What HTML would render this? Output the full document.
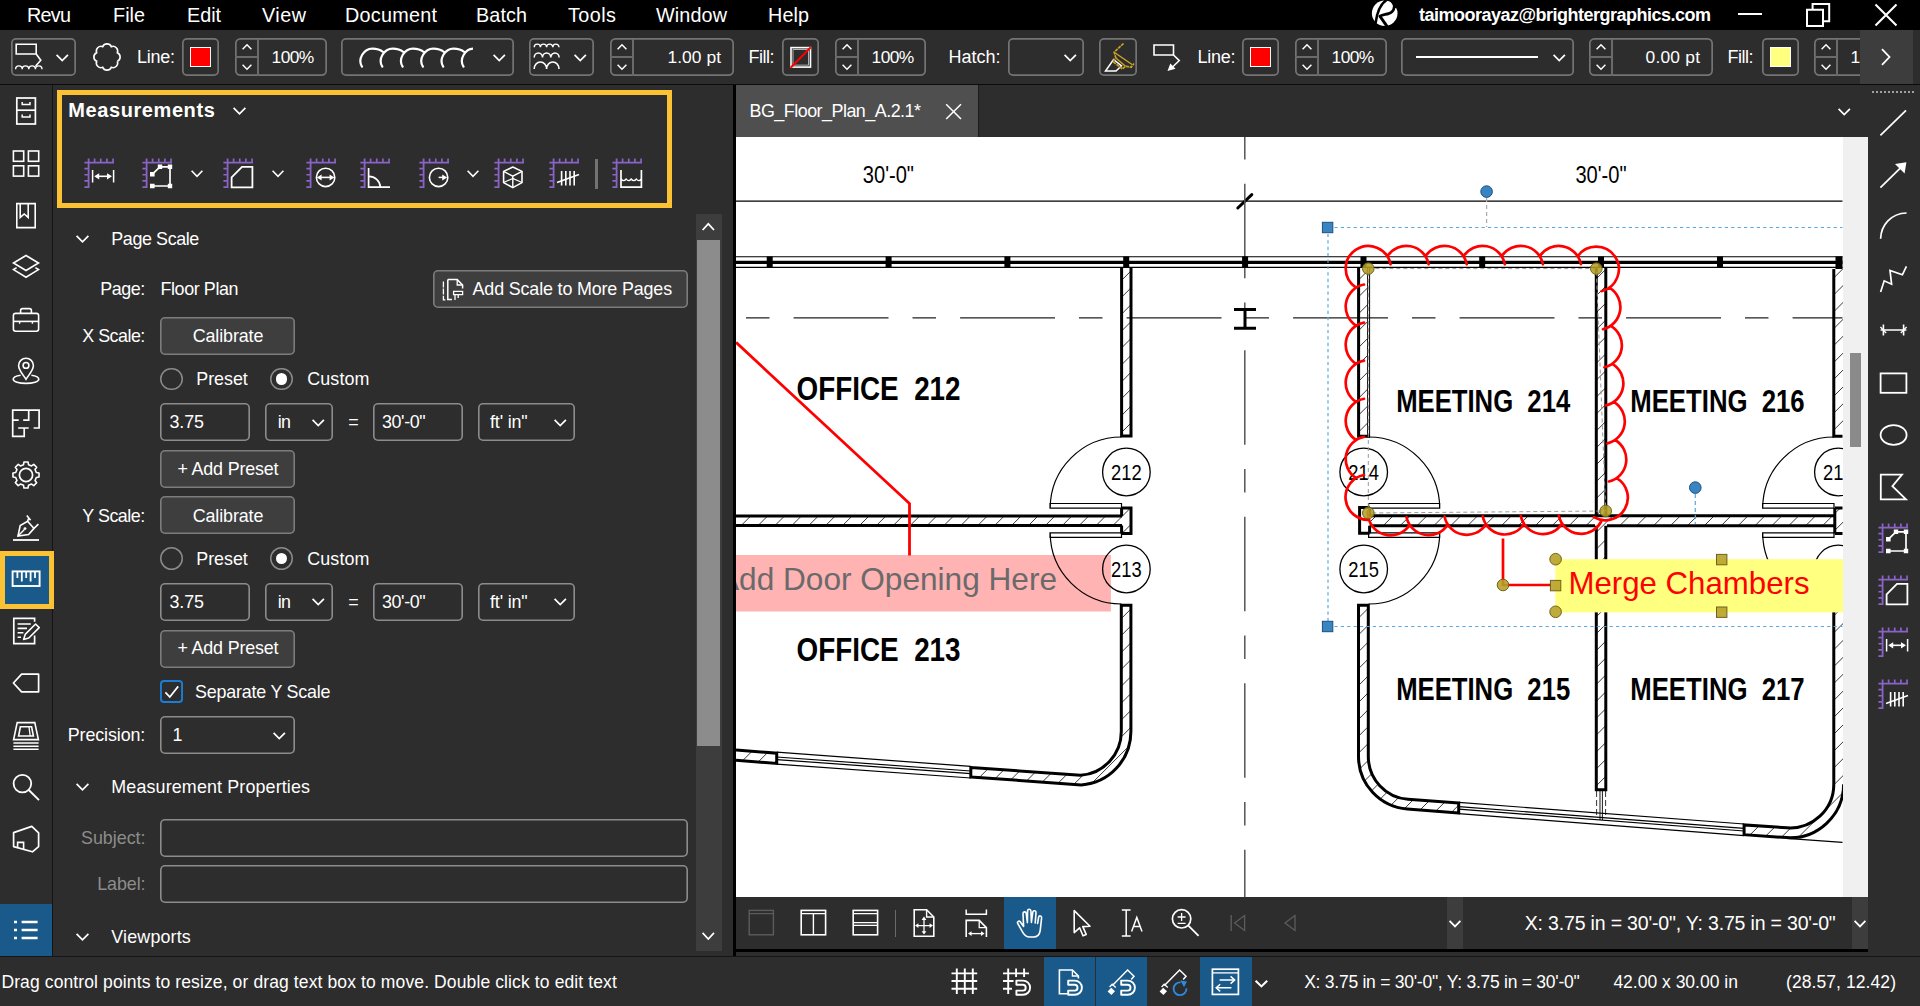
<!DOCTYPE html>
<html lang="en"><head><meta charset="utf-8"><title>Revu - BG_Floor_Plan_A.2.1</title>
<style>
html,body{margin:0;padding:0;background:#2d2d2d}
body{width:1920px;height:1006px;position:relative;overflow:hidden;font-family:"Liberation Sans",sans-serif;color:#fff}
.a{position:absolute;box-sizing:border-box;display:block}
.t{position:absolute;white-space:pre;display:block}
svg{overflow:visible}
</style></head><body>

<!-- menu bar -->
<div class="a" id="menubar" style="left:0;top:0;width:1920px;height:30px;background:#000">
<span class="t" id="m_Revu" style="left:27.00px;top:4px;font-size:19.80px;line-height:22px;letter-spacing:-0.729px;">Revu</span>
<span class="t" id="m_File" style="left:113.00px;top:4px;font-size:19.80px;line-height:22px;letter-spacing:0.042px;">File</span>
<span class="t" id="m_Edit" style="left:187.00px;top:4px;font-size:19.80px;line-height:22px;letter-spacing:-0.031px;">Edit</span>
<span class="t" id="m_View" style="left:262.00px;top:4px;font-size:19.80px;line-height:22px;letter-spacing:0.490px;">View</span>
<span class="t" id="m_Document" style="left:345.00px;top:4px;font-size:19.80px;line-height:22px;letter-spacing:0.263px;">Document</span>
<span class="t" id="m_Batch" style="left:476.00px;top:4px;font-size:19.80px;line-height:22px;letter-spacing:0.102px;">Batch</span>
<span class="t" id="m_Tools" style="left:568.00px;top:4px;font-size:19.80px;line-height:22px;letter-spacing:0.453px;">Tools</span>
<span class="t" id="m_Window" style="left:656.00px;top:4px;font-size:19.80px;line-height:22px;letter-spacing:0.128px;">Window</span>
<span class="t" id="m_Help" style="left:768.00px;top:4px;font-size:19.80px;line-height:22px;letter-spacing:0.104px;">Help</span>
<svg class="a" style="left:1371.00px;top:0.20px;" width="27" height="27" viewBox="0 0 27 27" fill="none" stroke="#fff" stroke-width="1.6"><circle cx="13.7" cy="13.2" r="12.8" fill="#fff" stroke="none"/><path d="M16.2 -0.6 C10.5 3 6.2 10 4.6 23" stroke="#000" stroke-width="2.5"/><path d="M8.9 16.2 C11.5 14.6 14.5 14.6 17.6 13.6 C21.4 12.4 23 9.6 23.2 6.6" stroke="#000" stroke-width="2.7" stroke-linecap="round"/><path d="M8.8 16 L16.2 26.6" stroke="#000" stroke-width="3"/><path d="M16.5 -1 C18.5 1.4 21.4 2.6 22.4 7.4 L28 9 V-1 Z" fill="#000" stroke="none"/></svg>
<span class="t" id="email" style="left:1419.00px;top:5px;font-size:18.00px;line-height:20px;font-weight:700;letter-spacing:-0.505px;">taimoorayaz@brightergraphics.com</span>
<div class="a" style="left:1738.00px;top:12.60px;width:24.00px;height:2.00px;background:#fff;"></div>
<svg class="a" style="left:1805.00px;top:2.00px;" width="26" height="26" viewBox="0 0 26 26" fill="none" stroke="#fff" stroke-width="1.6"><path d="M2 7.8 H18 V24 H2 Z" stroke-width="2"/><path d="M7.6 7 V1.9 H24.2 V19.2 H18.8" stroke-width="2"/></svg>
<svg class="a" style="left:1874.00px;top:3.00px;" width="24" height="24" viewBox="0 0 24 24" fill="none" stroke="#fff" stroke-width="1.6"><path d="M1.5 1.5 L22.5 22.5 M22.5 1.5 L1.5 22.5" stroke-width="2.1"/></svg>
</div>
<!-- properties toolbar -->
<div class="a" id="toolbar" style="left:0;top:30px;width:1920px;height:54px;background:#2d2d2d"></div>
<div class="a" style="left:0.00px;top:84.00px;width:1920.00px;height:1.00px;background:#0c0c0c;"></div>
<div class="a" style="left:11.00px;top:37.80px;width:65.00px;height:38.40px;border-radius:5px;box-shadow:inset 0 0 0 1.7px #747474;"></div>
<svg class="a" style="left:13.00px;top:40.00px;" width="32" height="32" viewBox="0 0 32 32" fill="none" stroke="#fff" stroke-width="1.6"><path d="M3.2 4.3 H23.2 V14 H3.2 Z"/><path d="M23.2 14 L27.8 20.3 L22.6 26"/><path d="M2.6 29.2 A3.3 3.3 0 0 1 9.2 29.2 A3.3 3.3 0 0 1 15.8 29.2 A3.3 3.3 0 0 1 22.4 29.2 A3.3 3.3 0 0 1 29 29.2" stroke-width="1.4"/></svg>
<svg class="a" style="left:55.50px;top:53.50px" width="12.5" height="7.6" fill="none" stroke="#fff" stroke-width="1.7"><path d="M0.6 0.8 L6.25 6.6 L11.9 0.8"/></svg>
<svg class="a" style="left:93.20px;top:42.90px;" width="28" height="28" viewBox="0 0 28 28" fill="none" stroke="#fff" stroke-width="1.6"><path d="M24.35 18.29 A4.70 4.70 0 0 1 18.29 24.35 A4.70 4.70 0 0 1 9.71 24.35 A4.70 4.70 0 0 1 3.65 18.29 A4.70 4.70 0 0 1 3.65 9.71 A4.70 4.70 0 0 1 9.71 3.65 A4.70 4.70 0 0 1 18.29 3.65 A4.70 4.70 0 0 1 24.35 9.71 A4.70 4.70 0 0 1 24.35 18.29" stroke-width="1.6"/></svg>
<span class="t" id="tb_line1" style="left:137.00px;top:47px;font-size:18.00px;line-height:20px;letter-spacing:-0.262px;">Line:</span>
<div class="a" style="left:182.00px;top:37.80px;width:37.00px;height:38.40px;border-radius:5px;box-shadow:inset 0 0 0 1.7px #747474;"></div><div class="a" style="left:190.00px;top:46.80px;width:19.40px;height:18.60px;background:#ff0000;border:1px solid #fff;box-sizing:content-box;"></div>
<div class="a" style="left:234.60px;top:37.80px;width:92.30px;height:38.40px;border-radius:5.5px;box-shadow:inset 0 0 0 1.7px #747474;"></div><div class="a" style="left:257.20px;top:38.50px;width:2.00px;height:37.00px;background:#6a6a6a;"></div><div class="a" style="left:235.00px;top:56.00px;width:22.60px;height:2.00px;background:#6a6a6a;"></div><svg class="a" style="left:241.80px;top:44.30px" width="10" height="6.2" fill="none" stroke="#fff" stroke-width="1.5"><path d="M0.6 5.2 L5 0.8 L9.4 5.2"/></svg><svg class="a" style="left:241.80px;top:63.80px" width="10" height="6.2" fill="none" stroke="#fff" stroke-width="1.5"><path d="M0.6 0.8 L5 5.2 L9.4 0.8"/></svg><span class="t" id="tb_pct1" style="left:271.60px;top:47px;font-size:17.40px;line-height:20px;letter-spacing:-0.595px;">100%</span>
<div class="a" style="left:341.00px;top:37.80px;width:172.60px;height:38.40px;border-radius:5px;box-shadow:inset 0 0 0 1.7px #747474;"></div>
<svg class="a" style="left:358.00px;top:46.50px;overflow:hidden" width="115.4" height="22" viewBox="0 0 115.4 22" fill="none" stroke="#fff" stroke-width="1.6"><path d="M4.0 19.6 C-0.7 12 5.8 1.6 14.3 1.6 C18.8 1.6 22.3 2.6 25.1 5 M24.3 19.6 C19.6 12 26.1 1.6 34.6 1.6 C39.1 1.6 42.6 2.6 45.4 5 M44.6 19.6 C39.9 12 46.4 1.6 54.9 1.6 C59.4 1.6 62.9 2.6 65.7 5 M64.9 19.6 C60.2 12 66.7 1.6 75.2 1.6 C79.7 1.6 83.2 2.6 86.0 5 M85.2 19.6 C80.5 12 87.0 1.6 95.5 1.6 C100.0 1.6 103.5 2.6 106.3 5 M105.5 19.6 C100.8 12 107.3 1.6 115.8 1.6 C120.3 1.6 123.8 2.6 126.6 5 " stroke-width="2.2" stroke-linecap="round"/></svg>
<svg class="a" style="left:492.50px;top:53.50px" width="12.5" height="7.6" fill="none" stroke="#fff" stroke-width="1.7"><path d="M0.6 0.8 L6.25 6.6 L11.9 0.8"/></svg>
<div class="a" style="left:529.00px;top:37.80px;width:65.40px;height:38.40px;border-radius:5px;box-shadow:inset 0 0 0 1.7px #747474;"></div>
<svg class="a" style="left:532.00px;top:42.00px;" width="30" height="30" viewBox="0 0 30 30" fill="none" stroke="#fff" stroke-width="1.6"><path d="M2.2 5.2 A3.1 3.1 0 0 1 8.4 5.2 A3.1 3.1 0 0 1 14.6 5.2 A3.1 3.1 0 0 1 20.8 5.2 A3.1 3.1 0 0 1 27 5.2" stroke-width="1.4"/><path d="M2.2 15.5 A4.15 4.6 0 0 1 10.5 15.5 A4.15 4.6 0 0 1 18.8 15.5 A4.15 4.6 0 0 1 27.1 15.5" stroke-width="1.5"/><path d="M2.2 27 A6.2 7 0 0 1 14.6 27 A6.2 7 0 0 1 27 27" stroke-width="1.6"/></svg>
<svg class="a" style="left:573.50px;top:53.50px" width="12.5" height="7.6" fill="none" stroke="#fff" stroke-width="1.7"><path d="M0.6 0.8 L6.25 6.6 L11.9 0.8"/></svg>
<div class="a" style="left:609.60px;top:37.80px;width:124.30px;height:38.40px;border-radius:5.5px;box-shadow:inset 0 0 0 1.7px #747474;"></div><div class="a" style="left:632.20px;top:38.50px;width:2.00px;height:37.00px;background:#6a6a6a;"></div><div class="a" style="left:610.00px;top:56.00px;width:22.60px;height:2.00px;background:#6a6a6a;"></div><svg class="a" style="left:616.80px;top:44.30px" width="10" height="6.2" fill="none" stroke="#fff" stroke-width="1.5"><path d="M0.6 5.2 L5 0.8 L9.4 5.2"/></svg><svg class="a" style="left:616.80px;top:63.80px" width="10" height="6.2" fill="none" stroke="#fff" stroke-width="1.5"><path d="M0.6 0.8 L5 5.2 L9.4 0.8"/></svg><span class="t" id="tb_pt1" style="left:667.50px;top:47px;font-size:17.40px;line-height:20px;letter-spacing:0.052px;">1.00 pt</span>
<span class="t" id="tb_fill1" style="left:748.50px;top:47px;font-size:18.00px;line-height:20px;letter-spacing:-0.500px;">Fill:</span>
<div class="a" style="left:782.00px;top:37.80px;width:37.00px;height:38.40px;border-radius:5px;box-shadow:inset 0 0 0 1.7px #747474;"></div>
<svg class="a" style="left:788.00px;top:44.00px;" width="26" height="26" viewBox="0 0 26 26" fill="none" stroke="#fff" stroke-width="1.6"><rect x="3" y="3.6" width="19.5" height="19.5" stroke="#fff" stroke-width="1.6"/><rect x="5" y="5.6" width="15.5" height="15.5" stroke="#d0d0d0" stroke-width="0.8"/><path d="M2.6 23.8 L22.8 3.2" stroke="#ff0000" stroke-width="2"/></svg>
<div class="a" style="left:834.60px;top:37.80px;width:91.30px;height:38.40px;border-radius:5.5px;box-shadow:inset 0 0 0 1.7px #747474;"></div><div class="a" style="left:857.20px;top:38.50px;width:2.00px;height:37.00px;background:#6a6a6a;"></div><div class="a" style="left:835.00px;top:56.00px;width:22.60px;height:2.00px;background:#6a6a6a;"></div><svg class="a" style="left:841.80px;top:44.30px" width="10" height="6.2" fill="none" stroke="#fff" stroke-width="1.5"><path d="M0.6 5.2 L5 0.8 L9.4 5.2"/></svg><svg class="a" style="left:841.80px;top:63.80px" width="10" height="6.2" fill="none" stroke="#fff" stroke-width="1.5"><path d="M0.6 0.8 L5 5.2 L9.4 0.8"/></svg><span class="t" id="tb_pct2" style="left:871.60px;top:47px;font-size:17.40px;line-height:20px;letter-spacing:-0.595px;">100%</span>
<span class="t" id="tb_hatch" style="left:948.50px;top:47px;font-size:18.00px;line-height:20px;letter-spacing:-0.006px;">Hatch:</span>
<div class="a" style="left:1008.00px;top:37.80px;width:76.00px;height:38.40px;border-radius:5px;box-shadow:inset 0 0 0 1.7px #747474;"></div>
<svg class="a" style="left:1063.50px;top:53.50px" width="12.5" height="7.6" fill="none" stroke="#fff" stroke-width="1.7"><path d="M0.6 0.8 L6.25 6.6 L11.9 0.8"/></svg>
<div class="a" style="left:1099.20px;top:37.80px;width:37.80px;height:38.40px;border-radius:5px;box-shadow:inset 0 0 0 1.7px #747474;"></div>
<svg class="a" style="left:1102.00px;top:40.00px;" width="32" height="32" viewBox="0 0 32 32" fill="none" stroke="#fff" stroke-width="1.6"><path d="M3.5 31 L14 31 L19.5 25.8 L11.5 19.5 Z" stroke="#fff" stroke-width="1.5"/><path d="M21.5 3.5 L12.2 12.2 L13.8 18 L10.8 21.5 L20.5 29 L23.5 26.2 L29.2 27.2 L32 23.5" stroke="#c9a227" stroke-width="1.7" stroke-dasharray="3.2 0.8"/><path d="M13.8 18 L23.5 26.2 M12.5 12.5 L30 24.5" stroke="#c9a227" stroke-width="1.5"/></svg>
<svg class="a" style="left:1151.00px;top:41.00px;" width="32" height="32" viewBox="0 0 32 32" fill="none" stroke="#fff" stroke-width="1.6"><path d="M3 4 H22.5 V14 H3 Z" stroke-width="1.6"/><path d="M22.5 14 L28.3 19.6 L21 26.5" stroke-width="1.5"/><path d="M16.5 30 L19.3 22.5 L24.5 27.8 Z" fill="#fff" stroke="none"/></svg>
<span class="t" id="tb_line2" style="left:1197.50px;top:47px;font-size:18.00px;line-height:20px;letter-spacing:-0.262px;">Line:</span>
<div class="a" style="left:1242.00px;top:37.80px;width:37.00px;height:38.40px;border-radius:5px;box-shadow:inset 0 0 0 1.7px #747474;"></div><div class="a" style="left:1250.00px;top:46.80px;width:19.40px;height:18.60px;background:#ff0000;border:1px solid #fff;box-sizing:content-box;"></div>
<div class="a" style="left:1294.60px;top:37.80px;width:92.30px;height:38.40px;border-radius:5.5px;box-shadow:inset 0 0 0 1.7px #747474;"></div><div class="a" style="left:1317.20px;top:38.50px;width:2.00px;height:37.00px;background:#6a6a6a;"></div><div class="a" style="left:1295.00px;top:56.00px;width:22.60px;height:2.00px;background:#6a6a6a;"></div><svg class="a" style="left:1301.80px;top:44.30px" width="10" height="6.2" fill="none" stroke="#fff" stroke-width="1.5"><path d="M0.6 5.2 L5 0.8 L9.4 5.2"/></svg><svg class="a" style="left:1301.80px;top:63.80px" width="10" height="6.2" fill="none" stroke="#fff" stroke-width="1.5"><path d="M0.6 0.8 L5 5.2 L9.4 0.8"/></svg><span class="t" id="tb_pct3" style="left:1331.60px;top:47px;font-size:17.40px;line-height:20px;letter-spacing:-0.595px;">100%</span>
<div class="a" style="left:1401.00px;top:37.80px;width:172.60px;height:38.40px;border-radius:5px;box-shadow:inset 0 0 0 1.7px #747474;"></div>
<div class="a" style="left:1416.00px;top:55.50px;width:122.00px;height:2.60px;background:#fff;"></div>
<svg class="a" style="left:1552.50px;top:53.50px" width="12.5" height="7.6" fill="none" stroke="#fff" stroke-width="1.7"><path d="M0.6 0.8 L6.25 6.6 L11.9 0.8"/></svg>
<div class="a" style="left:1588.60px;top:37.80px;width:124.30px;height:38.40px;border-radius:5.5px;box-shadow:inset 0 0 0 1.7px #747474;"></div><div class="a" style="left:1611.20px;top:38.50px;width:2.00px;height:37.00px;background:#6a6a6a;"></div><div class="a" style="left:1589.00px;top:56.00px;width:22.60px;height:2.00px;background:#6a6a6a;"></div><svg class="a" style="left:1595.80px;top:44.30px" width="10" height="6.2" fill="none" stroke="#fff" stroke-width="1.5"><path d="M0.6 5.2 L5 0.8 L9.4 5.2"/></svg><svg class="a" style="left:1595.80px;top:63.80px" width="10" height="6.2" fill="none" stroke="#fff" stroke-width="1.5"><path d="M0.6 0.8 L5 5.2 L9.4 0.8"/></svg><span class="t" id="tb_pt2" style="left:1645.50px;top:47px;font-size:17.40px;line-height:20px;letter-spacing:0.219px;">0.00 pt</span>
<span class="t" id="tb_fill2" style="left:1727.50px;top:47px;font-size:18.00px;line-height:20px;letter-spacing:-0.500px;">Fill:</span>
<div class="a" style="left:1761.50px;top:37.80px;width:37.00px;height:38.40px;border-radius:5px;box-shadow:inset 0 0 0 1.7px #747474;"></div><div class="a" style="left:1769.50px;top:46.80px;width:19.40px;height:18.60px;background:#ffff80;border:1px solid #fff;box-sizing:content-box;"></div>
<div class="a" style="left:1813.60px;top:37.80px;width:92.30px;height:38.40px;border-radius:5.5px;box-shadow:inset 0 0 0 1.7px #747474;"></div><div class="a" style="left:1836.20px;top:38.50px;width:2.00px;height:37.00px;background:#6a6a6a;"></div><div class="a" style="left:1814.00px;top:56.00px;width:22.60px;height:2.00px;background:#6a6a6a;"></div><svg class="a" style="left:1820.80px;top:44.30px" width="10" height="6.2" fill="none" stroke="#fff" stroke-width="1.5"><path d="M0.6 5.2 L5 0.8 L9.4 5.2"/></svg><svg class="a" style="left:1820.80px;top:63.80px" width="10" height="6.2" fill="none" stroke="#fff" stroke-width="1.5"><path d="M0.6 0.8 L5 5.2 L9.4 0.8"/></svg><span class="t" id="tb_pct4" style="left:1850.60px;top:47px;font-size:17.40px;line-height:20px;">100%</span>
<div class="a" style="left:1860.00px;top:30.00px;width:53.00px;height:54.00px;background:#3d3d3d;"></div>
<svg class="a" style="left:1880.00px;top:47.00px;" width="12" height="20" viewBox="0 0 12 20" fill="none" stroke="#fff" stroke-width="1.6"><path d="M2 2.2 L9.5 10 L2 17.8" stroke-width="1.8"/></svg>
<!-- left panel strip -->
<div class="a" style="left:52.00px;top:85.00px;width:1.40px;height:871.00px;background:#141414;"></div>
<svg class="a" style="left:10.00px;top:95.00px;" width="32" height="32" viewBox="0 0 32 32" fill="none" stroke="#fff" stroke-width="1.6"><rect x="6.8" y="3" width="18.6" height="26" stroke-width="1.7"/><path d="M6.8 15.2 H25.4" stroke-width="1.7"/><path d="M12.2 7 V9.6 H20 V7 M12.2 19.4 V22 H20 V19.4" stroke-width="1.5"/></svg>
<svg class="a" style="left:10.00px;top:147.00px;" width="32" height="32" viewBox="0 0 32 32" fill="none" stroke="#fff" stroke-width="1.6"><rect x="3.4" y="4" width="10.3" height="10.3"/><rect x="18.4" y="4" width="10.3" height="10.3"/><rect x="3.4" y="18.8" width="10.3" height="10.3"/><rect x="18.4" y="18.8" width="10.3" height="10.3"/></svg>
<svg class="a" style="left:10.00px;top:199.00px;" width="32" height="32" viewBox="0 0 32 32" fill="none" stroke="#fff" stroke-width="1.6"><path d="M6.8 4.6 H25.2 V28.6 H6.8 Z"/><path d="M10.2 4 V18.4 L14.2 15 L18.2 18.4 V4"/></svg>
<svg class="a" style="left:10.00px;top:251.00px;" width="32" height="32" viewBox="0 0 32 32" fill="none" stroke="#fff" stroke-width="1.6"><path d="M16 4.5 L28.5 12 L16 19.5 L3.5 12 Z"/><path d="M6.6 16.6 L3.5 18.6 L16 26.2 L28.5 18.6 L25.4 16.6"/></svg>
<svg class="a" style="left:10.00px;top:303.00px;" width="32" height="32" viewBox="0 0 32 32" fill="none" stroke="#fff" stroke-width="1.6"><rect x="3.4" y="10.4" width="25.2" height="17.8" rx="2.2"/><path d="M10.6 10.4 V7.6 Q10.6 5.6 12.6 5.6 H19.4 Q21.4 5.6 21.4 7.6 V10.4"/><path d="M3.4 18.4 H28.6" /><path d="M9.6 18.4 V20.8 M22.4 18.4 V20.8" stroke-width="1.4"/></svg>
<svg class="a" style="left:10.00px;top:355.00px;" width="32" height="32" viewBox="0 0 32 32" fill="none" stroke="#fff" stroke-width="1.6"><path d="M16 24.2 C12.5 19 8.6 15.2 8.6 10.6 A7.4 7.4 0 0 1 23.4 10.6 C23.4 15.2 19.5 19 16 24.2 Z"/><circle cx="16" cy="10.4" r="2.9"/><path d="M10.6 20.2 C5.6 21 3.2 22.6 3.2 24.2 C3.2 26.6 9 28.4 16 28.4 C23 28.4 28.8 26.6 28.8 24.2 C28.8 22.6 26.4 21 21.4 20.2"/></svg>
<svg class="a" style="left:10.00px;top:407.00px;" width="32" height="32" viewBox="0 0 32 32" fill="none" stroke="#fff" stroke-width="1.6"><path d="M23.6 21 H29.1 V3.1 H2.7 V29.3 H14.2 V21 M8.2 21 H18.7 M18.7 3.1 V13.1 H13.2 M2.7 13.1 H8.7" stroke-width="1.7"/></svg>
<svg class="a" style="left:10.00px;top:459.00px;" width="32" height="32" viewBox="0 0 32 32" fill="none" stroke="#fff" stroke-width="1.6"><path d="M13.53 5.69 L13.96 2.96 L18.04 2.96 L18.47 5.69 L21.54 6.97 L23.78 5.34 L26.66 8.22 L25.03 10.46 L26.31 13.53 L29.04 13.96 L29.04 18.04 L26.31 18.47 L25.03 21.54 L26.66 23.78 L23.78 26.66 L21.54 25.03 L18.47 26.31 L18.04 29.04 L13.96 29.04 L13.53 26.31 L10.46 25.03 L8.22 26.66 L5.34 23.78 L6.97 21.54 L5.69 18.47 L2.96 18.04 L2.96 13.96 L5.69 13.53 L6.97 10.46 L5.34 8.22 L8.22 5.34 L10.46 6.97 Z" stroke-linejoin="round" stroke-width="1.6"/><circle cx="16" cy="16" r="6.6" stroke-width="1.7"/></svg>
<svg class="a" style="left:10.00px;top:511.00px;" width="32" height="32" viewBox="0 0 32 32" fill="none" stroke="#fff" stroke-width="1.6"><path d="M3 29 H29" stroke-width="1.8"/><path d="M8 25 L10.2 14.6 L17.6 10.2 L24 17.4 L18.6 23.6 Z" stroke-width="1.6"/><path d="M8 25 L14.4 18.4" stroke-width="1.4"/><circle cx="15" cy="17.6" r="1.4" fill="#fff" stroke="none"/><path d="M16.8 4.6 L20.6 9.2 M18.8 7 L17.6 10.2 M24 17.4 L28.4 13.2" stroke-width="1.6"/></svg>
<div class="a" style="left:0.00px;top:551.00px;width:54.00px;height:57.50px;background:#fbc334;"></div>
<div class="a" style="left:4.50px;top:556.00px;width:44.50px;height:47.50px;background:#1a5a8a;"></div>
<svg class="a" style="left:10.00px;top:563.00px;" width="32" height="32" viewBox="0 0 32 32" fill="none" stroke="#fff" stroke-width="1.6"><rect x="2.6" y="8.4" width="27" height="14.6" stroke-width="1.9"/><path d="M7.4 9 V15 M11.8 9 V18.6 M16.2 9 V15 M20.6 9 V18.6 M25 9 V15" stroke-width="1.8"/></svg>
<svg class="a" style="left:10.00px;top:615.00px;" width="32" height="32" viewBox="0 0 32 32" fill="none" stroke="#fff" stroke-width="1.6"><path d="M24.6 6.8 V3.4 H3.8 V28.6 H24.6 V20.4" stroke-width="1.7"/><path d="M7.6 9 H20.8 M7.6 13.4 H17 M7.6 17.8 H13.4 M7.6 22.2 H11" stroke-width="1.6"/><path d="M13.6 24.4 L15.2 19.4 L25.6 9 L29.2 12.6 L18.8 23 Z" stroke-width="1.6" stroke-linejoin="round"/></svg>
<svg class="a" style="left:10.00px;top:667.00px;" width="32" height="32" viewBox="0 0 32 32" fill="none" stroke="#fff" stroke-width="1.6"><path d="M11.6 7.2 H28.6 V24.8 H11.6 L3.4 16 Z" stroke-width="1.7" stroke-linejoin="round"/></svg>
<svg class="a" style="left:10.00px;top:719.00px;" width="32" height="32" viewBox="0 0 32 32" fill="none" stroke="#fff" stroke-width="1.6"><path d="M7.2 3.6 H24.8 L28.4 20.6 H3.6 Z" stroke-width="1.6"/><path d="M10.4 7.8 H21.6 L23.4 17 H8.6 Z" stroke-width="1.6"/><path d="M19 7.8 L20.2 17" stroke-width="1.3"/><path d="M3.4 24 H28.6 M3.4 27.2 H28.6 M3.4 30.2 H28.6" stroke-width="1.5"/></svg>
<svg class="a" style="left:10.00px;top:771.00px;" width="32" height="32" viewBox="0 0 32 32" fill="none" stroke="#fff" stroke-width="1.6"><circle cx="12.4" cy="12.6" r="8.8" stroke-width="1.8"/><path d="M18.8 19 L29 29.2" stroke-width="1.9"/></svg>
<svg class="a" style="left:10.00px;top:823.00px;" width="32" height="32" viewBox="0 0 32 32" fill="none" stroke="#fff" stroke-width="1.6"><path d="M3.6 9.6 L21.8 3.4 L28.6 9.8 V23.6 L22.4 28.8 L3.6 23.6 Z" stroke-width="1.7" stroke-linejoin="round"/><path d="M7.6 24.4 V19.4 H13.6 V26" stroke-width="1.6"/></svg>
<div class="a" style="left:0.00px;top:904.00px;width:52.00px;height:52.00px;background:#1a5a8a;"></div>
<svg class="a" style="left:12.00px;top:917.00px;" width="28" height="26" viewBox="0 0 28 26" fill="none" stroke="#fff" stroke-width="1.6"><path d="M9.6 5 H25.6 M9.6 13 H25.6 M9.6 21 H25.6" stroke-width="2.7"/><path d="M2 5 H5 M2 13 H5 M2 21 H5" stroke-width="2.7"/></svg>
<!-- measurements panel -->
<div class="a" style="left:733.00px;top:85.00px;width:3.00px;height:870.60px;background:#000;"></div>
<div class="a" style="left:57.00px;top:90.00px;width:605.00px;height:108.00px;border:5px solid #fbc334;box-sizing:content-box;"></div>
<span class="t" id="p_title" style="left:68.30px;top:99px;font-size:20.00px;line-height:22px;font-weight:700;letter-spacing:0.585px;">Measurements</span>
<svg class="a" style="left:233.00px;top:107.00px" width="13" height="7.8" fill="none" stroke="#fff" stroke-width="1.7"><path d="M0.6 0.8 L6.5 6.8 L12.4 0.8"/></svg>
<svg class="a" style="left:83.90px;top:157.60px;" width="31" height="31" viewBox="0 0 31 31" fill="none" stroke="#fff" stroke-width="1.6"><path d="M0.4 4.6 H30 M4.6 0.4 V30" stroke="#8a63c6" stroke-width="1.8"/><path d="M10.60 0.4 V4.6 M0.4 10.60 H4.6 M16.75 0.4 V4.6 M0.4 16.75 H4.6 M22.90 0.4 V4.6 M0.4 22.90 H4.6 M29.05 0.4 V4.6 M0.4 29.05 H4.6 " stroke="#8a63c6" stroke-width="1.7"/><path d="M8.6 12 V24.6 M29.6 12 V24.6" stroke-width="1.5"/><path d="M12.4 18.3 H25.8" stroke-width="1.6"/><path d="M10.2 18.3 L15.2 15.2 V21.4 Z M28 18.3 L23 15.2 V21.4 Z" fill="#fff" stroke="none"/></svg>
<svg class="a" style="left:142.00px;top:157.60px;" width="31" height="31" viewBox="0 0 31 31" fill="none" stroke="#fff" stroke-width="1.6"><path d="M0.4 4.6 H30 M4.6 0.4 V30" stroke="#8a63c6" stroke-width="1.8"/><path d="M10.60 0.4 V4.6 M0.4 10.60 H4.6 M16.75 0.4 V4.6 M0.4 16.75 H4.6 M22.90 0.4 V4.6 M0.4 22.90 H4.6 M29.05 0.4 V4.6 M0.4 29.05 H4.6 " stroke="#8a63c6" stroke-width="1.7"/><path d="M10.4 16.2 L18 8.8 H28 V28 H10.4" stroke-width="1.7"/><path d="M8 14 H12.6 V18.4 H8 Z M15.8 6.6 H20.2 V11 H15.8 Z M25.8 6.6 H30.2 V11 H25.8 Z M25.8 25.8 H30.2 V30.2 H25.8 Z M8 25.8 H12.6 V30.2 H8 Z" fill="#fff" stroke="none"/></svg>
<svg class="a" style="left:223.40px;top:157.60px;" width="31" height="31" viewBox="0 0 31 31" fill="none" stroke="#fff" stroke-width="1.6"><path d="M0.4 4.6 H30 M4.6 0.4 V30" stroke="#8a63c6" stroke-width="1.8"/><path d="M10.60 0.4 V4.6 M0.4 10.60 H4.6 M16.75 0.4 V4.6 M0.4 16.75 H4.6 M22.90 0.4 V4.6 M0.4 22.90 H4.6 M29.05 0.4 V4.6 M0.4 29.05 H4.6 " stroke="#8a63c6" stroke-width="1.7"/><path d="M8.6 29.4 V19.4 L19 8.8 H29.4 V29.4 Z" stroke-width="1.8"/></svg>
<svg class="a" style="left:305.60px;top:157.60px;" width="31" height="31" viewBox="0 0 31 31" fill="none" stroke="#fff" stroke-width="1.6"><path d="M0.4 4.6 H30 M4.6 0.4 V30" stroke="#8a63c6" stroke-width="1.8"/><path d="M10.60 0.4 V4.6 M0.4 10.60 H4.6 M16.75 0.4 V4.6 M0.4 16.75 H4.6 M22.90 0.4 V4.6 M0.4 22.90 H4.6 M29.05 0.4 V4.6 M0.4 29.05 H4.6 " stroke="#8a63c6" stroke-width="1.7"/><circle cx="19.6" cy="19.4" r="9.2" stroke-width="1.6"/><path d="M13.6 19.4 H25.6" stroke-width="1.6"/><path d="M10.8 19.4 L15.6 16.4 V22.4 Z M28.4 19.4 L23.6 16.4 V22.4 Z" fill="#fff" stroke="none"/></svg>
<svg class="a" style="left:359.80px;top:157.60px;" width="31" height="31" viewBox="0 0 31 31" fill="none" stroke="#fff" stroke-width="1.6"><path d="M0.4 4.6 H30 M4.6 0.4 V30" stroke="#8a63c6" stroke-width="1.8"/><path d="M10.60 0.4 V4.6 M0.4 10.60 H4.6 M16.75 0.4 V4.6 M0.4 16.75 H4.6 M22.90 0.4 V4.6 M0.4 22.90 H4.6 M29.05 0.4 V4.6 M0.4 29.05 H4.6 " stroke="#8a63c6" stroke-width="1.7"/><path d="M8.6 10 V29.2 H30" stroke-width="1.7"/><path d="M8.6 18.4 A11.5 11.5 0 0 1 20.4 29.2" stroke-width="1.6"/></svg>
<svg class="a" style="left:418.60px;top:157.60px;" width="31" height="31" viewBox="0 0 31 31" fill="none" stroke="#fff" stroke-width="1.6"><path d="M0.4 4.6 H30 M4.6 0.4 V30" stroke="#8a63c6" stroke-width="1.8"/><path d="M10.60 0.4 V4.6 M0.4 10.60 H4.6 M16.75 0.4 V4.6 M0.4 16.75 H4.6 M22.90 0.4 V4.6 M0.4 22.90 H4.6 M29.05 0.4 V4.6 M0.4 29.05 H4.6 " stroke="#8a63c6" stroke-width="1.7"/><circle cx="19.6" cy="19.4" r="9.2" stroke-width="1.6"/><path d="M19.6 19.4 H25" stroke-width="1.5"/><path d="M28.2 19.4 L23.2 16.4 V22.4 Z" fill="#fff" stroke="none"/></svg>
<svg class="a" style="left:494.40px;top:157.60px;" width="31" height="31" viewBox="0 0 31 31" fill="none" stroke="#fff" stroke-width="1.6"><path d="M0.4 4.6 H30 M4.6 0.4 V30" stroke="#8a63c6" stroke-width="1.8"/><path d="M10.60 0.4 V4.6 M0.4 10.60 H4.6 M16.75 0.4 V4.6 M0.4 16.75 H4.6 M22.90 0.4 V4.6 M0.4 22.90 H4.6 M29.05 0.4 V4.6 M0.4 29.05 H4.6 " stroke="#8a63c6" stroke-width="1.7"/><path d="M18.8 9 L28 13.4 V24.6 L18.8 29.6 L9.6 24.6 V13.4 Z" stroke-width="1.6" stroke-linejoin="round"/><path d="M9.6 13.4 L18.8 18.2 L28 13.4 M18.8 18.2 V29.6" stroke-width="1.4"/><path d="M9.6 24.6 L18.8 20.4 L28 24.6" stroke-width="1.1"/></svg>
<svg class="a" style="left:548.80px;top:157.60px;" width="31" height="31" viewBox="0 0 31 31" fill="none" stroke="#fff" stroke-width="1.6"><path d="M0.4 4.6 H30 M4.6 0.4 V30" stroke="#8a63c6" stroke-width="1.8"/><path d="M10.60 0.4 V4.6 M0.4 10.60 H4.6 M16.75 0.4 V4.6 M0.4 16.75 H4.6 M22.90 0.4 V4.6 M0.4 22.90 H4.6 M29.05 0.4 V4.6 M0.4 29.05 H4.6 " stroke="#8a63c6" stroke-width="1.7"/><path d="M12.6 13 V27.6 M16.8 13 V27.6 M21 13 V27.6 M25.2 13 V27.6" stroke-width="1.6"/><path d="M8 24.6 L30 16.6" stroke-width="1.6"/></svg>
<svg class="a" style="left:611.60px;top:157.60px;" width="31" height="31" viewBox="0 0 31 31" fill="none" stroke="#fff" stroke-width="1.6"><path d="M0.4 4.6 H30 M4.6 0.4 V30" stroke="#8a63c6" stroke-width="1.8"/><path d="M10.60 0.4 V4.6 M0.4 10.60 H4.6 M16.75 0.4 V4.6 M0.4 16.75 H4.6 M22.90 0.4 V4.6 M0.4 22.90 H4.6 M29.05 0.4 V4.6 M0.4 29.05 H4.6 " stroke="#8a63c6" stroke-width="1.7"/><path d="M9 12 V29.2 H29.4 V12" stroke-width="1.7"/><path d="M9 21 Q11.6 24.4 14.2 21 Q16.6 24.4 19.2 21 Q21.8 24.4 24.4 21 Q26.8 24.4 29.4 21" stroke-width="1.3"/></svg>
<svg class="a" style="left:191.00px;top:170.30px" width="12" height="7.3" fill="none" stroke="#fff" stroke-width="1.6"><path d="M0.6 0.8 L6 6.3 L11.4 0.8"/></svg>
<svg class="a" style="left:272.00px;top:170.30px" width="12" height="7.3" fill="none" stroke="#fff" stroke-width="1.6"><path d="M0.6 0.8 L6 6.3 L11.4 0.8"/></svg>
<svg class="a" style="left:467.00px;top:170.30px" width="12" height="7.3" fill="none" stroke="#fff" stroke-width="1.6"><path d="M0.6 0.8 L6 6.3 L11.4 0.8"/></svg>
<div class="a" style="left:594.80px;top:158.50px;width:2.80px;height:30.00px;background:#727272;"></div>
<div class="a" style="left:696.00px;top:214.00px;width:26.00px;height:737.00px;background:#3d3d3d;"></div>
<div class="a" style="left:697.00px;top:240.00px;width:23.00px;height:506.00px;background:#8c8c8c;"></div>
<svg class="a" style="left:702.30px;top:223.20px" width="12.6" height="8" fill="none" stroke="#fff" stroke-width="1.7"><path d="M0.6 7 L6.3 0.8 L12 7"/></svg>
<svg class="a" style="left:702.30px;top:932.00px" width="12.6" height="8" fill="none" stroke="#fff" stroke-width="1.7"><path d="M0.6 0.8 L6.3 7 L12 0.8"/></svg>
<svg class="a" style="left:75.80px;top:235.00px" width="13" height="7.8" fill="none" stroke="#fff" stroke-width="1.7"><path d="M0.6 0.8 L6.5 6.8 L12.4 0.8"/></svg>
<span class="t" id="p_ps" style="left:111.30px;top:229px;font-size:17.90px;line-height:20px;letter-spacing:-0.391px;">Page Scale</span>
<span class="t" id="p_page" style="left:100.20px;top:279px;font-size:17.90px;line-height:20px;letter-spacing:-0.441px;">Page:</span>
<span class="t" id="p_fp" style="left:160.50px;top:279px;font-size:17.90px;line-height:20px;letter-spacing:-0.394px;">Floor Plan</span>
<div class="a" style="left:432.70px;top:270.30px;width:255.30px;height:37.70px;background:#3e3e3e;border-radius:5px;box-shadow:inset 0 0 0 1.6px #7c7c7c;"></div>
<svg class="a" style="left:442.00px;top:278.00px;" width="24" height="24" viewBox="0 0 24 24" fill="none" stroke="#fff" stroke-width="1.6"><path d="M5.8 1.6 H15.2 L20.6 7 V10.4 M5.8 1.6 V21.6 H10" stroke-width="1.5"/><path d="M15.2 1.6 V7 H20.6" stroke-width="1.3"/><path d="M1.4 3.4 V21.8 H4" stroke-width="1.3" stroke-dasharray="6 1.2"/><path d="M11.6 13.4 H20.6 V16.6 H11.6 Z" stroke-width="1.3"/><path d="M13 16.6 V22 M16.2 16.6 V20" stroke-width="1.3"/></svg>
<span class="t" id="p_addscale" style="left:472.60px;top:279px;font-size:17.90px;line-height:20px;letter-spacing:-0.154px;">Add Scale to More Pages</span>
<span class="t" id="xs_lab" style="left:82.30px;top:326px;font-size:17.90px;line-height:20px;letter-spacing:-0.520px;">X Scale:</span><div class="a" style="left:160.00px;top:316.80px;width:134.80px;height:38.00px;background:#3e3e3e;border-radius:5px;box-shadow:inset 0 0 0 1.6px #7c7c7c;"></div><span class="t" id="xs_cal" style="left:192.70px;top:326px;font-size:17.90px;line-height:20px;letter-spacing:-0.114px;">Calibrate</span><div class="a" style="left:160.00px;top:367.55px;width:22.70px;height:22.70px;border-radius:20px;box-shadow:inset 0 0 0 1.5px #8a8a8a;"></div><span class="t" id="xs_pre" style="left:196.30px;top:369px;font-size:17.90px;line-height:20px;letter-spacing:-0.044px;">Preset</span><div class="a" style="left:270.30px;top:367.55px;width:22.70px;height:22.70px;border-radius:20px;box-shadow:inset 0 0 0 1.5px #8a8a8a;"></div><div class="a" style="left:275.80px;top:373.05px;width:11.70px;height:11.70px;background:#fff;border-radius:10px;"></div><span class="t" id="xs_cus" style="left:307.20px;top:369px;font-size:17.90px;line-height:20px;letter-spacing:0.132px;">Custom</span><div class="a" style="left:160.00px;top:403.30px;width:89.60px;height:37.90px;border-radius:5px;box-shadow:inset 0 0 0 1.6px #8c8c8c;"></div><span class="t" id="xs_v1" style="left:169.40px;top:412px;font-size:17.90px;line-height:20px;letter-spacing:-0.076px;">3.75</span><div class="a" style="left:265.20px;top:403.30px;width:67.60px;height:37.90px;border-radius:5px;box-shadow:inset 0 0 0 1.6px #8c8c8c;"></div><span class="t" id="xs_in" style="left:277.70px;top:412px;font-size:17.90px;line-height:20px;letter-spacing:-0.637px;">in</span><svg class="a" style="left:311.80px;top:418.70px" width="12.5" height="7.6" fill="none" stroke="#fff" stroke-width="1.7"><path d="M0.6 0.8 L6.25 6.6 L11.9 0.8"/></svg><span class="t" id="xs_eq" style="left:348.20px;top:412px;font-size:17.90px;line-height:20px;">=</span><div class="a" style="left:373.00px;top:403.30px;width:90.00px;height:37.90px;border-radius:5px;box-shadow:inset 0 0 0 1.6px #8c8c8c;"></div><span class="t" id="xs_v2" style="left:382.00px;top:412px;font-size:17.90px;line-height:20px;letter-spacing:-0.396px;">30'-0"</span><div class="a" style="left:478.00px;top:403.30px;width:96.70px;height:37.90px;border-radius:5px;box-shadow:inset 0 0 0 1.6px #8c8c8c;"></div><span class="t" id="xs_ft" style="left:490.00px;top:412px;font-size:17.90px;line-height:20px;letter-spacing:-0.152px;">ft' in"</span><svg class="a" style="left:554.00px;top:418.70px" width="12.5" height="7.6" fill="none" stroke="#fff" stroke-width="1.7"><path d="M0.6 0.8 L6.25 6.6 L11.9 0.8"/></svg><div class="a" style="left:160.00px;top:449.90px;width:134.80px;height:38.00px;background:#3e3e3e;border-radius:5px;box-shadow:inset 0 0 0 1.6px #7c7c7c;"></div><span class="t" id="xs_add" style="left:177.50px;top:459px;font-size:17.90px;line-height:20px;letter-spacing:-0.178px;">+ Add Preset</span>
<span class="t" id="ys_lab" style="left:82.30px;top:506px;font-size:17.90px;line-height:20px;letter-spacing:-0.473px;">Y Scale:</span><div class="a" style="left:160.00px;top:496.40px;width:134.80px;height:38.00px;background:#3e3e3e;border-radius:5px;box-shadow:inset 0 0 0 1.6px #7c7c7c;"></div><span class="t" id="ys_cal" style="left:192.70px;top:506px;font-size:17.90px;line-height:20px;letter-spacing:-0.114px;">Calibrate</span><div class="a" style="left:160.00px;top:547.15px;width:22.70px;height:22.70px;border-radius:20px;box-shadow:inset 0 0 0 1.5px #8a8a8a;"></div><span class="t" id="ys_pre" style="left:196.30px;top:549px;font-size:17.90px;line-height:20px;letter-spacing:-0.044px;">Preset</span><div class="a" style="left:270.30px;top:547.15px;width:22.70px;height:22.70px;border-radius:20px;box-shadow:inset 0 0 0 1.5px #8a8a8a;"></div><div class="a" style="left:275.80px;top:552.65px;width:11.70px;height:11.70px;background:#fff;border-radius:10px;"></div><span class="t" id="ys_cus" style="left:307.20px;top:549px;font-size:17.90px;line-height:20px;letter-spacing:0.132px;">Custom</span><div class="a" style="left:160.00px;top:582.90px;width:89.60px;height:37.90px;border-radius:5px;box-shadow:inset 0 0 0 1.6px #8c8c8c;"></div><span class="t" id="ys_v1" style="left:169.40px;top:592px;font-size:17.90px;line-height:20px;letter-spacing:-0.076px;">3.75</span><div class="a" style="left:265.20px;top:582.90px;width:67.60px;height:37.90px;border-radius:5px;box-shadow:inset 0 0 0 1.6px #8c8c8c;"></div><span class="t" id="ys_in" style="left:277.70px;top:592px;font-size:17.90px;line-height:20px;letter-spacing:-0.637px;">in</span><svg class="a" style="left:311.80px;top:598.30px" width="12.5" height="7.6" fill="none" stroke="#fff" stroke-width="1.7"><path d="M0.6 0.8 L6.25 6.6 L11.9 0.8"/></svg><span class="t" id="ys_eq" style="left:348.20px;top:592px;font-size:17.90px;line-height:20px;">=</span><div class="a" style="left:373.00px;top:582.90px;width:90.00px;height:37.90px;border-radius:5px;box-shadow:inset 0 0 0 1.6px #8c8c8c;"></div><span class="t" id="ys_v2" style="left:382.00px;top:592px;font-size:17.90px;line-height:20px;letter-spacing:-0.396px;">30'-0"</span><div class="a" style="left:478.00px;top:582.90px;width:96.70px;height:37.90px;border-radius:5px;box-shadow:inset 0 0 0 1.6px #8c8c8c;"></div><span class="t" id="ys_ft" style="left:490.00px;top:592px;font-size:17.90px;line-height:20px;letter-spacing:-0.152px;">ft' in"</span><svg class="a" style="left:554.00px;top:598.30px" width="12.5" height="7.6" fill="none" stroke="#fff" stroke-width="1.7"><path d="M0.6 0.8 L6.25 6.6 L11.9 0.8"/></svg><div class="a" style="left:160.00px;top:629.50px;width:134.80px;height:38.00px;background:#3e3e3e;border-radius:5px;box-shadow:inset 0 0 0 1.6px #7c7c7c;"></div><span class="t" id="ys_add" style="left:177.50px;top:638px;font-size:17.90px;line-height:20px;letter-spacing:-0.178px;">+ Add Preset</span>
<div class="a" style="left:160.00px;top:680.20px;width:22.60px;height:22.60px;border-radius:4px;box-shadow:inset 0 0 0 1.9px #1b7ed4;"></div>
<svg class="a" style="left:162.00px;top:682.00px;" width="20" height="20" viewBox="0 0 20 20" fill="none" stroke="#fff" stroke-width="1.6"><path d="M3.4 10.4 L7.8 15 L16.2 4.4" stroke-width="1.7"/></svg>
<span class="t" id="p_sep" style="left:195.00px;top:682px;font-size:17.90px;line-height:20px;letter-spacing:-0.206px;">Separate Y Scale</span>
<span class="t" id="p_prec" style="left:67.80px;top:725px;font-size:17.90px;line-height:20px;letter-spacing:-0.118px;">Precision:</span>
<div class="a" style="left:160.00px;top:716.00px;width:134.80px;height:38.00px;border-radius:5px;box-shadow:inset 0 0 0 1.6px #8c8c8c;"></div>
<span class="t" id="p_one" style="left:172.60px;top:725px;font-size:17.90px;line-height:20px;">1</span>
<svg class="a" style="left:273.20px;top:731.70px" width="12.5" height="7.6" fill="none" stroke="#fff" stroke-width="1.7"><path d="M0.6 0.8 L6.25 6.6 L11.9 0.8"/></svg>
<svg class="a" style="left:75.80px;top:783.40px" width="13" height="7.8" fill="none" stroke="#fff" stroke-width="1.7"><path d="M0.6 0.8 L6.5 6.8 L12.4 0.8"/></svg>
<span class="t" id="p_mp" style="left:111.30px;top:777px;font-size:17.90px;line-height:20px;letter-spacing:0.134px;">Measurement Properties</span>
<span class="t" id="p_subj" style="left:81.00px;top:828px;font-size:17.90px;line-height:20px;color:#8c8c8c;letter-spacing:-0.022px;">Subject:</span>
<div class="a" style="left:160.00px;top:818.80px;width:528.00px;height:38.00px;border-radius:5px;box-shadow:inset 0 0 0 1.6px #8c8c8c;"></div>
<span class="t" id="p_label" style="left:97.20px;top:874px;font-size:17.90px;line-height:20px;color:#8c8c8c;letter-spacing:-0.090px;">Label:</span>
<div class="a" style="left:160.00px;top:865.20px;width:528.00px;height:38.00px;border-radius:5px;box-shadow:inset 0 0 0 1.6px #8c8c8c;"></div>
<svg class="a" style="left:75.80px;top:933.40px" width="13" height="7.8" fill="none" stroke="#fff" stroke-width="1.7"><path d="M0.6 0.8 L6.5 6.8 L12.4 0.8"/></svg>
<span class="t" id="p_vp" style="left:111.30px;top:927px;font-size:17.90px;line-height:20px;letter-spacing:0.158px;">Viewports</span>
<!-- document -->
<svg class="a" id="plan" style="left:736px;top:137px;background:#fff;overflow:hidden" width="1106.5" height="760.2" viewBox="736 137 1106.5 760.2" fill="none" stroke="#000" font-family="Liberation Sans, sans-serif">
<rect x="736" y="555" width="374.9" height="56.5" fill="#ffb3b3" stroke="none"/>
<text x="862.8" y="183.4" font-size="24.4" font-weight="400" fill="#000" stroke="none" textLength="51.2" lengthAdjust="spacingAndGlyphs" xml:space="preserve">30'-0&quot;</text>
<text x="1575.4" y="183.4" font-size="24.4" font-weight="400" fill="#000" stroke="none" textLength="51.2" lengthAdjust="spacingAndGlyphs" xml:space="preserve">30'-0&quot;</text>
<path d="M736 201.2 H1842.5" stroke-width="1.2"/>
<path d="M1237.8 208 L1251.8 194.6" stroke-width="3" stroke-linecap="round"/>
<path d="M1244.8 137.0 V159.6 M1244.8 183.7 V278.3 M1244.8 302.6 V326.1 M1244.8 350.2 V444.8 M1244.8 469.1 V492.6 M1244.8 516.7 V611.3 M1244.8 635.6 V659.1 M1244.8 683.2 V777.8 M1244.8 802.1 V825.6 M1244.8 849.7 V897.2 " stroke="#555" stroke-width="1.5"/>
<path d="M746.0 317.9 H769.5 M793.6 317.9 H888.5 M912.5 317.9 H936.0 M960.1 317.9 H1055.0 M1079.0 317.9 H1102.5 M1126.6 317.9 H1221.5 M1245.5 317.9 H1269.0 M1293.1 317.9 H1388.0 M1412.0 317.9 H1435.5 M1459.6 317.9 H1554.5 M1578.5 317.9 H1602.0 M1626.1 317.9 H1721.0 M1745.0 317.9 H1768.5 M1792.6 317.9 H1842.5 " stroke="#222" stroke-width="1.1"/>
<path d="M1234 309.5 H1256 M1234 328.2 H1256 M1245 309.5 V328.2" stroke-width="3"/>
<path d="M736 256.8 H1842.5 M736 267.4 H1842.5" stroke-width="1.1"/>
<path d="M736 262.4 H1842.5" stroke-width="3.1"/>
<path d="M766.7 256.4 h6 v11.4 h-6 Z M885.6 256.4 h6 v11.4 h-6 Z M1004.4 256.4 h6 v11.4 h-6 Z M1123.2 256.4 h6 v11.4 h-6 Z M1242.1 256.4 h6 v11.4 h-6 Z M1360.5 256.4 h6 v11.4 h-6 Z M1479.2 256.4 h6 v11.4 h-6 Z M1598.0 256.4 h6 v11.4 h-6 Z M1717.0 256.4 h6 v11.4 h-6 Z " fill="#000" stroke="none"/>
<rect x="1835.5" y="256.4" width="7" height="12.6" fill="#000" stroke="none"/>
<path d="M1367.6 267.5 V437.4 M1369.6 267.5 V437.4" stroke-width="1"/>
<path d="M1600 791 V820 M1602.4 791 V820" stroke-width="0.9"/>
<path d="M1596.6 791 V817 M1605.6 791 V817" stroke-width="0.8" stroke-dasharray="6 3"/>
<clipPath id="walls"><path d="M1121.6 267.5 H1131.0 V436.0 H1121.6 Z M736.0 516.0 H1122.0 V526.0 H736.0 Z M1121.6 508.0 H1131.0 V533.4 H1121.6 Z M1130.9 605 V731.5 A53.5 53.5 0 0 1 1081.2 784.9 L970.8 777 V767.4 L1080.5 775.3 A43.9 43.9 0 0 0 1121.3 731.5 V605 Z M736 750 L776.7 753.2 V763.4 L736 760.2 Z M1358.6 267.5 H1367.6 V436.0 H1358.6 Z M1369.6 515.8 H1834.8 V525.7 H1369.6 Z M1596.3 267.5 H1605.8 V517.0 H1596.3 Z M1596.3 525.0 H1605.8 V790.0 H1596.3 Z M1358.5 605 V756.5 A52.7 52.7 0 0 0 1407.3 809.05 L1458.7 812.9 V803.1 L1408 799.3 A42.9 42.9 0 0 1 1368.3 756.5 V605 Z M1833.8 269.0 H1843.0 V436.0 H1833.8 Z M1833.8 605 V784.2 A43.7 43.7 0 0 1 1787 827.8 L1744.1 824.9 V834.7 L1786.4 837.6 A53.5 53.5 0 0 0 1843.6 784.2 V605 Z M1834.8 508.0 H1843.0 V533.4 H1834.8 Z"/></clipPath>
<path d="M-19.2 897.2 L741.0 137.0 M-2.3 897.2 L757.9 137.0 M14.6 897.2 L774.8 137.0 M31.5 897.2 L791.7 137.0 M48.4 897.2 L808.6 137.0 M65.3 897.2 L825.5 137.0 M82.2 897.2 L842.4 137.0 M99.1 897.2 L859.3 137.0 M116.0 897.2 L876.2 137.0 M132.9 897.2 L893.1 137.0 M149.8 897.2 L910.0 137.0 M166.7 897.2 L926.9 137.0 M183.6 897.2 L943.8 137.0 M200.5 897.2 L960.7 137.0 M217.4 897.2 L977.6 137.0 M234.3 897.2 L994.5 137.0 M251.2 897.2 L1011.4 137.0 M268.1 897.2 L1028.3 137.0 M285.0 897.2 L1045.2 137.0 M301.9 897.2 L1062.1 137.0 M318.8 897.2 L1079.0 137.0 M335.7 897.2 L1095.9 137.0 M352.6 897.2 L1112.8 137.0 M369.5 897.2 L1129.7 137.0 M386.4 897.2 L1146.6 137.0 M403.3 897.2 L1163.5 137.0 M420.2 897.2 L1180.4 137.0 M437.1 897.2 L1197.3 137.0 M454.0 897.2 L1214.2 137.0 M470.9 897.2 L1231.1 137.0 M487.8 897.2 L1248.0 137.0 M504.7 897.2 L1264.9 137.0 M521.6 897.2 L1281.8 137.0 M538.5 897.2 L1298.7 137.0 M555.4 897.2 L1315.6 137.0 M572.3 897.2 L1332.5 137.0 M589.2 897.2 L1349.4 137.0 M606.1 897.2 L1366.3 137.0 M623.0 897.2 L1383.2 137.0 M639.9 897.2 L1400.1 137.0 M656.8 897.2 L1417.0 137.0 M673.7 897.2 L1433.9 137.0 M690.6 897.2 L1450.8 137.0 M707.5 897.2 L1467.7 137.0 M724.4 897.2 L1484.6 137.0 M741.3 897.2 L1501.5 137.0 M758.2 897.2 L1518.4 137.0 M775.1 897.2 L1535.3 137.0 M792.0 897.2 L1552.2 137.0 M808.9 897.2 L1569.1 137.0 M825.8 897.2 L1586.0 137.0 M842.7 897.2 L1602.9 137.0 M859.6 897.2 L1619.8 137.0 M876.5 897.2 L1636.7 137.0 M893.4 897.2 L1653.6 137.0 M910.3 897.2 L1670.5 137.0 M927.2 897.2 L1687.4 137.0 M944.1 897.2 L1704.3 137.0 M961.0 897.2 L1721.2 137.0 M977.9 897.2 L1738.1 137.0 M994.8 897.2 L1755.0 137.0 M1011.7 897.2 L1771.9 137.0 M1028.6 897.2 L1788.8 137.0 M1045.5 897.2 L1805.7 137.0 M1062.4 897.2 L1822.6 137.0 M1079.3 897.2 L1839.5 137.0 M1096.2 897.2 L1856.4 137.0 M1113.1 897.2 L1873.3 137.0 M1130.0 897.2 L1890.2 137.0 M1146.9 897.2 L1907.1 137.0 M1163.8 897.2 L1924.0 137.0 M1180.7 897.2 L1940.9 137.0 M1197.6 897.2 L1957.8 137.0 M1214.5 897.2 L1974.7 137.0 M1231.4 897.2 L1991.6 137.0 M1248.3 897.2 L2008.5 137.0 M1265.2 897.2 L2025.4 137.0 M1282.1 897.2 L2042.3 137.0 M1299.0 897.2 L2059.2 137.0 M1315.9 897.2 L2076.1 137.0 M1332.8 897.2 L2093.0 137.0 M1349.7 897.2 L2109.9 137.0 M1366.6 897.2 L2126.8 137.0 M1383.5 897.2 L2143.7 137.0 M1400.4 897.2 L2160.6 137.0 M1417.3 897.2 L2177.5 137.0 M1434.2 897.2 L2194.4 137.0 M1451.1 897.2 L2211.3 137.0 M1468.0 897.2 L2228.2 137.0 M1484.9 897.2 L2245.1 137.0 M1501.8 897.2 L2262.0 137.0 M1518.7 897.2 L2278.9 137.0 M1535.6 897.2 L2295.8 137.0 M1552.5 897.2 L2312.7 137.0 M1569.4 897.2 L2329.6 137.0 M1586.3 897.2 L2346.5 137.0 M1603.2 897.2 L2363.4 137.0 M1620.1 897.2 L2380.3 137.0 M1637.0 897.2 L2397.2 137.0 M1653.9 897.2 L2414.1 137.0 M1670.8 897.2 L2431.0 137.0 M1687.7 897.2 L2447.9 137.0 M1704.6 897.2 L2464.8 137.0 M1721.5 897.2 L2481.7 137.0 M1738.4 897.2 L2498.6 137.0 M1755.3 897.2 L2515.5 137.0 M1772.2 897.2 L2532.4 137.0 M1789.1 897.2 L2549.3 137.0 M1806.0 897.2 L2566.2 137.0 M1822.9 897.2 L2583.1 137.0 M1839.8 897.2 L2600.0 137.0 " stroke-width="0.9" stroke="#222" clip-path="url(#walls)"/>
<path d="M1050 503.5 H1121.5 V508.2 H1050 Z M1121.5 437 A71.3 71.3 0 0 0 1050.2 508.2 M1050 532.8 H1121.5 V537.4 H1050 Z M1050.2 532.8 A71.3 71.3 0 0 0 1121.5 604 M776.7 752.2 L970.8 766.4 M776.7 764.2 L970.8 778.0 M776.7 757.0 L970.8 771.0 M776.7 759.6 L970.8 773.6 M1368.6 503.5 H1439.7 V508.2 H1368.6 Z M1368.6 437 A71.2 71.2 0 0 1 1439.7 508.2 M1368.6 532.8 H1439.7 V537.4 H1368.6 Z M1439.7 532.8 A71.2 71.2 0 0 1 1368.6 604 M1458.7 802.4 L1744.1 824.0 M1458.7 813.6 L1744.1 835.6 M1458.7 806.6 L1744.1 828.4 M1458.7 809.2 L1744.1 831.0 M1786.4 838.4 L1842.5 842.4 M1762.6 503.5 H1834 V508.2 H1762.6 Z M1834 437 A71.3 71.3 0 0 0 1762.7 508.2 M1762.6 532.8 H1834 V537.4 H1762.6 Z M1762.7 532.8 A71.3 71.3 0 0 0 1834 604" stroke-width="1.2"/>
<path d="M1121.6 267.5 V437.4 M1131 267.5 V437.4 M1120.2 436 H1132.4 M736 515.9 H1122 M736 525.6 H1122 M1121.6 508 H1131 V533.4 H1121.6 M1121.6 508 V515.9 M1121.6 525.6 V533.4 M1130.9 603.8 V731.5 A53.5 53.5 0 0 1 1081.2 784.9 L970.8 777 M1121.3 603.8 V731.5 A43.9 43.9 0 0 1 1080.5 775.3 L970.8 767.4 M1120 605.2 H1132.3 M970.8 766 V778.4 M736 750 L776.7 753.2 V763.4 L736 760.2 M1358.6 267.5 V437.4 M1357.1 436.2 H1370 M1369.6 515.8 H1834.8 M1369.6 525.7 H1595 M1607 525.7 H1834.8 M1369.6 507.6 H1359.6 V533.2 H1369.6 M1369.6 507.6 V515.8 M1369.6 525.7 V533.2 M1596.3 267.5 V516 M1605.8 267.5 V516 M1596.3 525.7 V791.2 M1605.8 525.7 V791.2 M1594.8 789.8 H1607.3 M1358.5 603.8 V756.5 A52.7 52.7 0 0 0 1407.3 809.05 L1458.7 812.9 M1368.3 603.8 V756.5 A42.9 42.9 0 0 0 1408 799.3 L1458.7 803.1 M1357 605.2 H1369.8 M1458.7 801.6 V814.4 M1833.8 269 V437.4 M1832.4 436.2 H1842.5 M1833.8 603.8 V784.2 A43.7 43.7 0 0 1 1787 827.8 L1744.1 824.9 V834.7 L1786.4 837.6 A53.5 53.5 0 0 0 1843.6 784.2 M1832.4 605.2 H1842.5 M1834.8 508 V533.4 M1834.8 508 H1842.5 M1834.8 533.4 H1842.5" stroke-width="3"/>
<circle cx="1126.4" cy="472.0" r="23.8" stroke-width="1.3"/>
<text x="1111.0" y="480.2" font-size="21.5" font-weight="400" fill="#000" stroke="none" textLength="30.6" lengthAdjust="spacingAndGlyphs" xml:space="preserve">212</text>
<circle cx="1126.4" cy="569.0" r="23.8" stroke-width="1.3"/>
<text x="1111.0" y="577.2" font-size="21.5" font-weight="400" fill="#000" stroke="none" textLength="30.6" lengthAdjust="spacingAndGlyphs" xml:space="preserve">213</text>
<circle cx="1363.7" cy="472.0" r="23.8" stroke-width="1.3"/>
<text x="1348.3" y="480.2" font-size="21.5" font-weight="400" fill="#000" stroke="none" textLength="30.6" lengthAdjust="spacingAndGlyphs" xml:space="preserve">214</text>
<circle cx="1363.7" cy="569.0" r="23.8" stroke-width="1.3"/>
<text x="1348.3" y="577.2" font-size="21.5" font-weight="400" fill="#000" stroke="none" textLength="30.6" lengthAdjust="spacingAndGlyphs" xml:space="preserve">215</text>
<circle cx="1838.4" cy="472.0" r="23.8" stroke-width="1.3"/>
<text x="1823.0" y="480.2" font-size="21.5" font-weight="400" fill="#000" stroke="none" textLength="30.6" lengthAdjust="spacingAndGlyphs" xml:space="preserve">216</text>
<circle cx="1838.4" cy="569.0" r="23.8" stroke-width="1.3"/>
<text x="1823.0" y="577.2" font-size="21.5" font-weight="400" fill="#000" stroke="none" textLength="30.6" lengthAdjust="spacingAndGlyphs" xml:space="preserve">217</text>
<text x="796.6" y="400.2" font-size="34" font-weight="700" fill="#000" stroke="none" textLength="164.0" lengthAdjust="spacingAndGlyphs" xml:space="preserve">OFFICE  212</text>
<text x="796.6" y="660.8" font-size="34" font-weight="700" fill="#000" stroke="none" textLength="164.0" lengthAdjust="spacingAndGlyphs" xml:space="preserve">OFFICE  213</text>
<text x="1396.2" y="411.6" font-size="30.8" font-weight="700" fill="#000" stroke="none" textLength="174.0" lengthAdjust="spacingAndGlyphs" xml:space="preserve">MEETING  214</text>
<text x="1630.3" y="411.6" font-size="30.8" font-weight="700" fill="#000" stroke="none" textLength="174.4" lengthAdjust="spacingAndGlyphs" xml:space="preserve">MEETING  216</text>
<text x="1396.2" y="699.6" font-size="30.8" font-weight="700" fill="#000" stroke="none" textLength="174.0" lengthAdjust="spacingAndGlyphs" xml:space="preserve">MEETING  215</text>
<text x="1630.3" y="699.6" font-size="30.8" font-weight="700" fill="#000" stroke="none" textLength="174.4" lengthAdjust="spacingAndGlyphs" xml:space="preserve">MEETING  217</text>
<path d="M736 342.4 L909.5 503.6 V555.5" stroke="#ff0000" stroke-width="2.8" stroke-linejoin="miter"/>
<text x="718.0" y="590.5" font-size="31.6" font-weight="400" fill="#6a6a6a" stroke="none" textLength="339.0" lengthAdjust="spacingAndGlyphs" xml:space="preserve">Add Door Opening Here</text>
<path d="M1356.1 287.6 A22.6 22.6 0 1 1 1390.5 264.3 M1387.3 256.4 A22.6 22.6 0 0 1 1428.6 264.3 M1425.4 256.4 A22.6 22.6 0 0 1 1466.7 264.3 M1463.5 256.4 A22.6 22.6 0 0 1 1504.8 264.3 M1501.6 256.4 A22.6 22.6 0 0 1 1542.9 264.3 M1539.7 256.4 A22.6 22.6 0 0 1 1580.9 264.2 M1577.7 256.3 A22.6 22.6 0 1 1 1601.5 291.2 M1609.2 287.7 A22.6 22.6 0 0 1 1603.0 329.2 M1610.7 325.8 A22.6 22.6 0 0 1 1604.4 367.3 M1612.2 363.9 A22.6 22.6 0 0 1 1605.9 405.4 M1613.6 401.9 A22.6 22.6 0 0 1 1607.4 443.4 M1615.1 440.0 A22.6 22.6 0 0 1 1608.9 481.5 M1616.6 478.1 A22.6 22.6 0 0 1 1593.9 517.2 M1601.9 519.9 A22.6 22.6 0 0 1 1558.9 515.7 M1562.1 523.5 A22.6 22.6 0 0 1 1520.8 516.0 M1524.0 523.9 A22.6 22.6 0 0 1 1482.7 516.3 M1485.9 524.2 A22.6 22.6 0 0 1 1444.6 516.7 M1447.8 524.5 A22.6 22.6 0 0 1 1406.5 517.0 M1409.7 524.8 A22.6 22.6 0 0 1 1368.0 511.4 M1369.1 519.8 A22.6 22.6 0 0 1 1364.0 475.0 M1356.1 478.1 A22.6 22.6 0 0 1 1364.0 436.9 M1356.1 440.0 A22.6 22.6 0 0 1 1364.0 398.8 M1356.1 401.9 A22.6 22.6 0 0 1 1364.0 360.7 M1356.1 363.8 A22.6 22.6 0 0 1 1364.0 322.6 M1356.1 325.7 A22.6 22.6 0 0 1 1364.0 284.5 " stroke="#ff0000" stroke-width="2.7" stroke-linecap="round"/>
<path d="M1368.3 268.6 L1596.3 268.6 L1605.7 511 L1368.3 513 Z" stroke="#9a9a9a" stroke-width="1" stroke-dasharray="4 3"/>
<path d="M1503 538.4 V585 H1551" stroke="#ff0000" stroke-width="2.7"/>
<rect x="1555.3" y="559.2" width="290" height="53.2" fill="#ffff80" stroke="none"/>
<text x="1568.5" y="593.8" font-size="31" font-weight="400" fill="#ff0000" stroke="none" textLength="241.0" lengthAdjust="spacingAndGlyphs" xml:space="preserve">Merge Chambers</text>
<path d="M1328 227.5 H1842.5 M1328 227.5 V626.5 M1328 626.5 H1842.5" stroke="#55a9e0" stroke-width="1.2" stroke-dasharray="3.2 3.2"/>
<path d="M1486.6 198 V227" stroke="#aaa" stroke-width="1.2" stroke-dasharray="4 3"/>
<path d="M1695.3 494 V524" stroke="#55a9e0" stroke-width="1.2" stroke-dasharray="4 3"/>
<rect x="1322.4" y="222.3" width="10.4" height="10.4" fill="#3985c2" stroke="#1d4f7c" stroke-width="1"/>
<rect x="1322.4" y="621.3" width="10.4" height="10.4" fill="#3985c2" stroke="#1d4f7c" stroke-width="1"/>
<circle cx="1486.6" cy="191.6" r="5.8" fill="#3985c2" stroke="#1d4f7c" stroke-width="1"/>
<circle cx="1695.3" cy="487.6" r="5.8" fill="#3985c2" stroke="#1d4f7c" stroke-width="1"/>
<circle cx="1368.3" cy="268.6" r="5.8" fill="#b59f24" fill-opacity="0.88" stroke="#6f621c" stroke-width="1"/>
<circle cx="1596.3" cy="268.6" r="5.8" fill="#b59f24" fill-opacity="0.88" stroke="#6f621c" stroke-width="1"/>
<circle cx="1605.7" cy="511.0" r="5.8" fill="#b59f24" fill-opacity="0.88" stroke="#6f621c" stroke-width="1"/>
<circle cx="1368.3" cy="513.0" r="5.8" fill="#b59f24" fill-opacity="0.88" stroke="#6f621c" stroke-width="1"/>
<circle cx="1503.0" cy="585.0" r="5.8" fill="#b59f24" fill-opacity="0.88" stroke="#6f621c" stroke-width="1"/>
<circle cx="1555.6" cy="559.2" r="5.8" fill="#b59f24" fill-opacity="0.88" stroke="#6f621c" stroke-width="1"/>
<circle cx="1555.6" cy="611.8" r="5.8" fill="#b59f24" fill-opacity="0.88" stroke="#6f621c" stroke-width="1"/>
<rect x="1550.4" y="580.4" width="10.4" height="10.4" fill="#b59f24" fill-opacity="0.88" stroke="#6f621c" stroke-width="1"/>
<rect x="1716.5" y="554.4" width="10.4" height="10.4" fill="#b59f24" fill-opacity="0.88" stroke="#6f621c" stroke-width="1"/>
<rect x="1716.5" y="607.0" width="10.4" height="10.4" fill="#b59f24" fill-opacity="0.88" stroke="#6f621c" stroke-width="1"/>
</svg>
<div class="a" style="left:736.00px;top:85.00px;width:242.40px;height:52.00px;background:#4f4f4f;"></div>
<div class="a" style="left:978.40px;top:85.00px;width:1.00px;height:52.00px;background:#1c1c1c;"></div>
<span class="t" id="tab" style="left:749.50px;top:101px;font-size:17.90px;line-height:20px;letter-spacing:-0.501px;">BG_Floor_Plan_A.2.1*</span>
<svg class="a" style="left:944.60px;top:102.60px;" width="18" height="18" viewBox="0 0 18 18" fill="none" stroke="#fff" stroke-width="1.6"><path d="M1.2 1.2 L16 16 M16 1.2 L1.2 16" stroke-width="1.5"/></svg>
<svg class="a" style="left:1838.40px;top:107.50px" width="12.5" height="7.6" fill="none" stroke="#fff" stroke-width="1.7"><path d="M0.6 0.8 L6.25 6.6 L11.9 0.8"/></svg>
<div class="a" style="left:1842.50px;top:137.00px;width:25.50px;height:760.20px;background:#f0f0f0;"></div>
<div class="a" style="left:1850.00px;top:353.00px;width:11.00px;height:94.00px;background:#8a8a8a;"></div>
<div class="a" style="left:733.00px;top:948.80px;width:1135.00px;height:3.20px;background:#000;"></div>
<div class="a" style="left:0.00px;top:955.60px;width:1920.00px;height:1.50px;background:#161616;"></div>
<svg class="a" style="left:748.00px;top:909.00px;" width="27" height="27" viewBox="0 0 27 27" fill="none" stroke="#fff" stroke-width="1.6"><rect x="1.2" y="1.4" width="24.2" height="24.4" stroke="#5c5c5c" stroke-width="1.4"/><path d="M1.2 4.6 H25.4" stroke="#5c5c5c" stroke-width="1.2"/></svg>
<svg class="a" style="left:800.00px;top:909.00px;" width="27" height="27" viewBox="0 0 27 27" fill="none" stroke="#fff" stroke-width="1.6"><rect x="1.2" y="1.4" width="24.4" height="24.4" stroke-width="1.6"/><path d="M1.2 4.6 H25.6 M13.4 4.6 V25.8" stroke-width="1.4"/></svg>
<svg class="a" style="left:852.00px;top:909.00px;" width="27" height="27" viewBox="0 0 27 27" fill="none" stroke="#fff" stroke-width="1.6"><rect x="1.2" y="1.4" width="24.4" height="24.4" stroke-width="1.6"/><path d="M1.2 4.6 H25.6 M1.2 13.6 H25.6 M1.2 16.4 H25.6" stroke-width="1.3"/></svg>
<div class="a" style="left:895.20px;top:910.00px;width:1.20px;height:27.00px;background:#6a6a6a;"></div>
<svg class="a" style="left:912.00px;top:908.00px;" width="26" height="30" viewBox="0 0 26 30" fill="none" stroke="#fff" stroke-width="1.6"><path d="M2.2 1.8 H14.6 L21.8 9 V28.2 H2.2 Z" stroke-width="1.6"/><path d="M14.6 1.8 V9 H21.8" stroke-width="1.4"/><path d="M12 10.6 V24.6 M5 17.6 H19" stroke-width="1.3"/><path d="M12 8.6 L14.4 12 H9.6 Z M12 26.6 L14.4 23.2 H9.6 Z M3 17.6 L6.4 15.2 V20 Z M21 17.6 L17.6 15.2 V20 Z" fill="#fff" stroke="none"/></svg>
<svg class="a" style="left:964.00px;top:908.00px;" width="26" height="30" viewBox="0 0 26 30" fill="none" stroke="#fff" stroke-width="1.6"><path d="M2.2 1.4 V6.2 H22.4 V1.4" stroke-width="1.5"/><path d="M2.2 29 V12.4 H15.2 L22.4 19.6 V29" stroke-width="1.6"/><path d="M15.2 12.4 V19.6 H22.4" stroke-width="1.3"/><path d="M6.6 25.6 H18" stroke-width="1.3"/><path d="M4 25.6 L7.6 23.2 V28 Z M20.6 25.6 L17 23.2 V28 Z" fill="#fff" stroke="none"/></svg>
<div class="a" style="left:1004.00px;top:897.20px;width:52.00px;height:51.60px;background:#1a5a8a;"></div>
<svg class="a" style="left:1015.00px;top:907.00px;" width="30" height="32" viewBox="0 0 30 32" fill="none" stroke="#fff" stroke-width="1.6"><path d="M8.6 19.4 L5.2 14.8 C4 13.2 1.8 14.8 2.8 16.6 L7.8 25.4 C9.4 28.2 11.6 30 14.6 30 H18.6 C22.6 30 24.6 27.4 25.2 23.6 L26.6 10.8 C26.8 8.6 24 8.2 23.6 10.4 L22.6 16.4 M8.6 19.4 L8 6.6 C7.9 4.4 10.9 4.2 11.2 6.4 L12.4 15.6 M12.4 15.6 L12.6 4 C12.6 1.6 15.8 1.6 15.9 4 L16.4 15.4 M16.4 15.4 L17.8 5.2 C18.1 3 21.2 3.4 21 5.6 L20.2 16" stroke-width="1.6" stroke-linejoin="round" stroke-linecap="round"/></svg>
<svg class="a" style="left:1071.00px;top:908.00px;" width="24" height="30" viewBox="0 0 24 30" fill="none" stroke="#fff" stroke-width="1.6"><path d="M3.2 2.6 V24.6 L8.6 19.8 L12 27.8 L15.2 26.4 L11.8 18.6 L19 18.2 Z" stroke-width="1.6" stroke-linejoin="round"/></svg>
<svg class="a" style="left:1120.00px;top:908.00px;" width="26" height="30" viewBox="0 0 26 30" fill="none" stroke="#fff" stroke-width="1.6"><path d="M1.8 2 H10.6 M1.8 28 H10.6 M6.2 2 V28" stroke-width="1.5"/><path d="M11.6 23.4 L16.8 9.4 L22 23.4 M13.4 18.6 H20.2" stroke-width="1.5"/></svg>
<svg class="a" style="left:1170.00px;top:907.00px;" width="32" height="32" viewBox="0 0 32 32" fill="none" stroke="#fff" stroke-width="1.6"><circle cx="11.6" cy="11.8" r="9.2" stroke-width="1.7"/><path d="M18.4 18.6 L28.6 28.8" stroke-width="1.8"/><path d="M7.6 10 H15.6 M11.6 6 V14 M7.6 16.4 H15.6" stroke-width="1.3"/></svg>
<svg class="a" style="left:1229.00px;top:913.00px;" width="18" height="20" viewBox="0 0 18 20" fill="none" stroke="#fff" stroke-width="1.6"><path d="M2.2 2 V18" stroke="#5c5c5c" stroke-width="1.4"/><path d="M15.6 2.6 L5.6 10 L15.6 17.4 Z" stroke="#5c5c5c" stroke-width="1.3"/></svg>
<svg class="a" style="left:1283.00px;top:913.00px;" width="14" height="20" viewBox="0 0 14 20" fill="none" stroke="#fff" stroke-width="1.6"><path d="M12 2.6 L2 10 L12 17.4 Z" stroke="#5c5c5c" stroke-width="1.3"/></svg>
<div class="a" style="left:1446.60px;top:897.20px;width:16.40px;height:51.60px;background:#3d3d3d;"></div>
<svg class="a" style="left:1449.00px;top:920.00px" width="12" height="7.4" fill="none" stroke="#fff" stroke-width="1.8"><path d="M0.6 0.8 L6 6.4 L11.4 0.8"/></svg>
<span class="t" id="docscale" style="left:1524.80px;top:912px;font-size:19.50px;line-height:22px;letter-spacing:-0.179px;">X: 3.75 in = 30'-0", Y: 3.75 in = 30'-0"</span>
<div class="a" style="left:1852.00px;top:897.20px;width:16.00px;height:51.60px;background:#3d3d3d;"></div>
<svg class="a" style="left:1854.20px;top:920.00px" width="12" height="7.4" fill="none" stroke="#fff" stroke-width="1.8"><path d="M0.6 0.8 L6 6.4 L11.4 0.8"/></svg>
<!-- right shapes toolbar -->
<div class="a" style="left:1872px;top:91px;width:42px;height:2px;background:repeating-linear-gradient(90deg,#a0a0a0 0,#a0a0a0 2px,transparent 2px,transparent 4px)"></div>
<svg class="a" style="left:1878.00px;top:106.50px;" width="32" height="32" viewBox="0 0 32 32" fill="none" stroke="#fff" stroke-width="1.6"><path d="M2.4 28.4 L28 3.4" stroke-width="1.7"/></svg>
<svg class="a" style="left:1878.00px;top:158.80px;" width="32" height="32" viewBox="0 0 32 32" fill="none" stroke="#fff" stroke-width="1.6"><path d="M2.4 28.6 L22 9.4" stroke-width="1.7"/><path d="M28.4 3.2 L26.6 14.6 L17 5 Z" fill="#fff" stroke="none"/></svg>
<svg class="a" style="left:1878.00px;top:210.00px;" width="32" height="32" viewBox="0 0 32 32" fill="none" stroke="#fff" stroke-width="1.6"><path d="M2.6 28.8 C3 15 13 3.4 28.6 3" stroke-width="1.7"/></svg>
<svg class="a" style="left:1878.00px;top:262.60px;" width="32" height="32" viewBox="0 0 32 32" fill="none" stroke="#fff" stroke-width="1.6"><path d="M2.6 29 L6.2 17.8 L13.6 21.2 L12 7.4 L24.4 11.8 L28.4 3.4" stroke-width="1.7" stroke-linejoin="miter"/></svg>
<svg class="a" style="left:1878.00px;top:314.00px;" width="32" height="32" viewBox="0 0 32 32" fill="none" stroke="#fff" stroke-width="1.6"><path d="M2.6 16 H28.4 M5.4 10.6 V21.4 M25.6 10.6 V21.4" stroke-width="1.6"/><path d="M2.4 13 L8.2 19 M22.8 19 L28.6 13" stroke-width="1.3"/></svg>
<svg class="a" style="left:1878.00px;top:366.50px;" width="32" height="32" viewBox="0 0 32 32" fill="none" stroke="#fff" stroke-width="1.6"><rect x="2.6" y="6.4" width="25.8" height="19.4" stroke-width="1.8"/></svg>
<svg class="a" style="left:1878.00px;top:419.00px;" width="32" height="32" viewBox="0 0 32 32" fill="none" stroke="#fff" stroke-width="1.6"><ellipse cx="15.6" cy="16" rx="13" ry="9.8" stroke-width="1.8"/></svg>
<svg class="a" style="left:1878.00px;top:471.00px;" width="32" height="32" viewBox="0 0 32 32" fill="none" stroke="#fff" stroke-width="1.6"><path d="M2.8 3.6 H24 L14.4 15.2 L28 28.4 H2.8 Z" stroke-width="1.8" stroke-linejoin="miter"/></svg>
<svg class="a" style="left:1877.60px;top:523.40px;" width="31" height="31" viewBox="0 0 31 31" fill="none" stroke="#fff" stroke-width="1.6"><path d="M0.4 4.6 H30 M4.6 0.4 V30" stroke="#8a63c6" stroke-width="1.8"/><path d="M10.60 0.4 V4.6 M0.4 10.60 H4.6 M16.75 0.4 V4.6 M0.4 16.75 H4.6 M22.90 0.4 V4.6 M0.4 22.90 H4.6 M29.05 0.4 V4.6 M0.4 29.05 H4.6 " stroke="#8a63c6" stroke-width="1.7"/><path d="M10.4 16.2 L18 8.8 H28 V28 H10.4" stroke-width="1.7"/><path d="M8 14 H12.6 V18.4 H8 Z M15.8 6.6 H20.2 V11 H15.8 Z M25.8 6.6 H30.2 V11 H25.8 Z M25.8 25.8 H30.2 V30.2 H25.8 Z M8 25.8 H12.6 V30.2 H8 Z" fill="#fff" stroke="none"/></svg>
<svg class="a" style="left:1877.60px;top:575.40px;" width="31" height="31" viewBox="0 0 31 31" fill="none" stroke="#fff" stroke-width="1.6"><path d="M0.4 4.6 H30 M4.6 0.4 V30" stroke="#8a63c6" stroke-width="1.8"/><path d="M10.60 0.4 V4.6 M0.4 10.60 H4.6 M16.75 0.4 V4.6 M0.4 16.75 H4.6 M22.90 0.4 V4.6 M0.4 22.90 H4.6 M29.05 0.4 V4.6 M0.4 29.05 H4.6 " stroke="#8a63c6" stroke-width="1.7"/><path d="M8.6 29.4 V19.4 L19 8.8 H29.4 V29.4 Z" stroke-width="1.8"/></svg>
<svg class="a" style="left:1877.60px;top:627.40px;" width="31" height="31" viewBox="0 0 31 31" fill="none" stroke="#fff" stroke-width="1.6"><path d="M0.4 4.6 H30 M4.6 0.4 V30" stroke="#8a63c6" stroke-width="1.8"/><path d="M10.60 0.4 V4.6 M0.4 10.60 H4.6 M16.75 0.4 V4.6 M0.4 16.75 H4.6 M22.90 0.4 V4.6 M0.4 22.90 H4.6 M29.05 0.4 V4.6 M0.4 29.05 H4.6 " stroke="#8a63c6" stroke-width="1.7"/><path d="M8.6 12 V24.6 M29.6 12 V24.6" stroke-width="1.5"/><path d="M12.4 18.3 H25.8" stroke-width="1.6"/><path d="M10.2 18.3 L15.2 15.2 V21.4 Z M28 18.3 L23 15.2 V21.4 Z" fill="#fff" stroke="none"/></svg>
<svg class="a" style="left:1877.60px;top:679.40px;" width="31" height="31" viewBox="0 0 31 31" fill="none" stroke="#fff" stroke-width="1.6"><path d="M0.4 4.6 H30 M4.6 0.4 V30" stroke="#8a63c6" stroke-width="1.8"/><path d="M10.60 0.4 V4.6 M0.4 10.60 H4.6 M16.75 0.4 V4.6 M0.4 16.75 H4.6 M22.90 0.4 V4.6 M0.4 22.90 H4.6 M29.05 0.4 V4.6 M0.4 29.05 H4.6 " stroke="#8a63c6" stroke-width="1.7"/><path d="M12.6 13 V27.6 M16.8 13 V27.6 M21 13 V27.6 M25.2 13 V27.6" stroke-width="1.6"/><path d="M8 24.6 L30 16.6" stroke-width="1.6"/></svg>
<!-- status bar -->
<span class="t" id="st_hint" style="left:1.40px;top:972px;font-size:17.50px;line-height:20px;letter-spacing:0.117px;">Drag control points to resize, or drag text box to move. Double click to edit text</span>
<svg class="a" style="left:950px;top:966px;" width="30" height="30" viewBox="950 966 30 30" fill="none" stroke="#fff" stroke-width="1.6"><path d="M956.8 968.4 V994 M964.8 968.4 V994 M972.8 968.4 V994 M951.5 973.4 H977.2 M951.5 981 H977.2 M951.5 988.8 H977.2" stroke-width="1.9"/></svg>
<svg class="a" style="left:1002px;top:966px;" width="32" height="32" viewBox="1002 966 32 32" fill="none" stroke="#fff" stroke-width="1.6"><path d="M1008.2 968.4 V994 M1016.1 968.4 V977 M1024.1 968.4 V977 M1003 973.4 H1029 M1003 981 H1013.5 M1003 988.8 H1012" stroke-width="1.9"/><path d="M1016.4 980.6 h6.6 a7.1 7.1 0 0 1 0 14.2 h-6.6 v-4.2 h6.4 a2.9 2.9 0 0 0 0 -5.8 h-6.4 Z" stroke-width="1.9" stroke-linejoin="round" fill="#2d2d2d"/></svg>
<div class="a" style="left:1043.60px;top:957.00px;width:51.80px;height:49.00px;background:#1a5a8a;"></div>
<svg class="a" style="left:1056px;top:966px;" width="30" height="32" viewBox="1056 966 30 32" fill="none" stroke="#fff" stroke-width="1.6"><path d="M1069 993.8 H1059.4 V970 H1072.4 L1078.4 976 V978.6" stroke-width="1.6"/><path d="M1072.4 970 V976 H1078.4" stroke-width="1.3"/><path d="M1068.2 980.6 h6.6 a7.1 7.1 0 0 1 0 14.2 h-6.6 v-4.2 h6.4 a2.9 2.9 0 0 0 0 -5.8 h-6.4 Z" stroke-width="1.9" stroke-linejoin="round" fill="#1a5a8a"/></svg>
<div class="a" style="left:1095.90px;top:957.00px;width:51.20px;height:49.00px;background:#1a5a8a;"></div>
<svg class="a" style="left:1106px;top:966px;" width="32" height="32" viewBox="1106 966 32 32" fill="none" stroke="#fff" stroke-width="1.6"><path d="M1112.4 985.6 L1127.6 970 L1134.0 976.2 L1131.2 979.4" stroke-width="1.5" stroke-linejoin="miter"/><path d="M1107.6 991.6 l3.6 -3.8 l3.8 3.4 l-3.6 3.8 Z" fill="#fff" stroke="none"/><path d="M1109.6 987 l2.6 -2.8 l3.6 3.2" stroke-width="1.3"/><path d="M1121.2 980.6 h6.6 a7.1 7.1 0 0 1 0 14.2 h-6.6 v-4.2 h6.4 a2.9 2.9 0 0 0 0 -5.8 h-6.4 Z" stroke-width="1.9" stroke-linejoin="round" fill="#1a5a8a"/></svg>
<svg class="a" style="left:1158px;top:966px;" width="32" height="32" viewBox="1158 966 32 32" fill="none" stroke="#fff" stroke-width="1.6"><path d="M1164.4 985.6 L1179.6 970 L1186.0 976.2 L1183.2 979.4" stroke-width="1.5" stroke-linejoin="miter"/><path d="M1159.6 991.6 l3.6 -3.8 l3.8 3.4 l-3.6 3.8 Z" fill="#fff" stroke="none"/><path d="M1161.6 987 l2.6 -2.8 l3.6 3.2" stroke-width="1.3"/><path d="M1186.4 988.4 A6.4 6.4 0 1 1 1180.6 982.4" stroke="#2b8be0" stroke-width="1.9"/><path d="M1180.4 980.4 L1187 981.4 L1184 987.2 Z" fill="#2b8be0" stroke="none"/></svg>
<div class="a" style="left:1199.50px;top:957.00px;width:52.00px;height:49.00px;background:#1a5a8a;"></div>
<svg class="a" style="left:1210px;top:966px;" width="32" height="32" viewBox="1210 966 32 32" fill="none" stroke="#fff" stroke-width="1.6"><rect x="1212.4" y="969.2" width="26" height="25.2" stroke-width="1.7"/><path d="M1212.4 972.9 H1238.4" stroke-width="1.3"/><path d="M1219.6 980 H1234.4 M1216.4 987.8 H1231.4" stroke-width="1.5"/><path d="M1230.6 976.4 L1234.6 980 L1230.6 983.6 M1220.2 984.2 L1216.2 987.8 L1220.2 991.4" stroke-width="1.5"/></svg>
<svg class="a" style="left:1255.20px;top:979.80px" width="12.8" height="7.4" fill="none" stroke="#fff" stroke-width="2.1"><path d="M0.6 0.8 L6.4 6.4 L12.2 0.8"/></svg>
<span class="t" id="st_scale" style="left:1304.20px;top:972px;font-size:17.50px;line-height:20px;letter-spacing:-0.253px;">X: 3.75 in = 30'-0", Y: 3.75 in = 30'-0"</span>
<span class="t" id="st_size" style="left:1613.40px;top:972px;font-size:17.50px;line-height:20px;letter-spacing:-0.003px;">42.00 x 30.00 in</span>
<span class="t" id="st_pos" style="left:1786.00px;top:972px;font-size:17.50px;line-height:20px;letter-spacing:0.079px;">(28.57, 12.42)</span>
</body></html>
